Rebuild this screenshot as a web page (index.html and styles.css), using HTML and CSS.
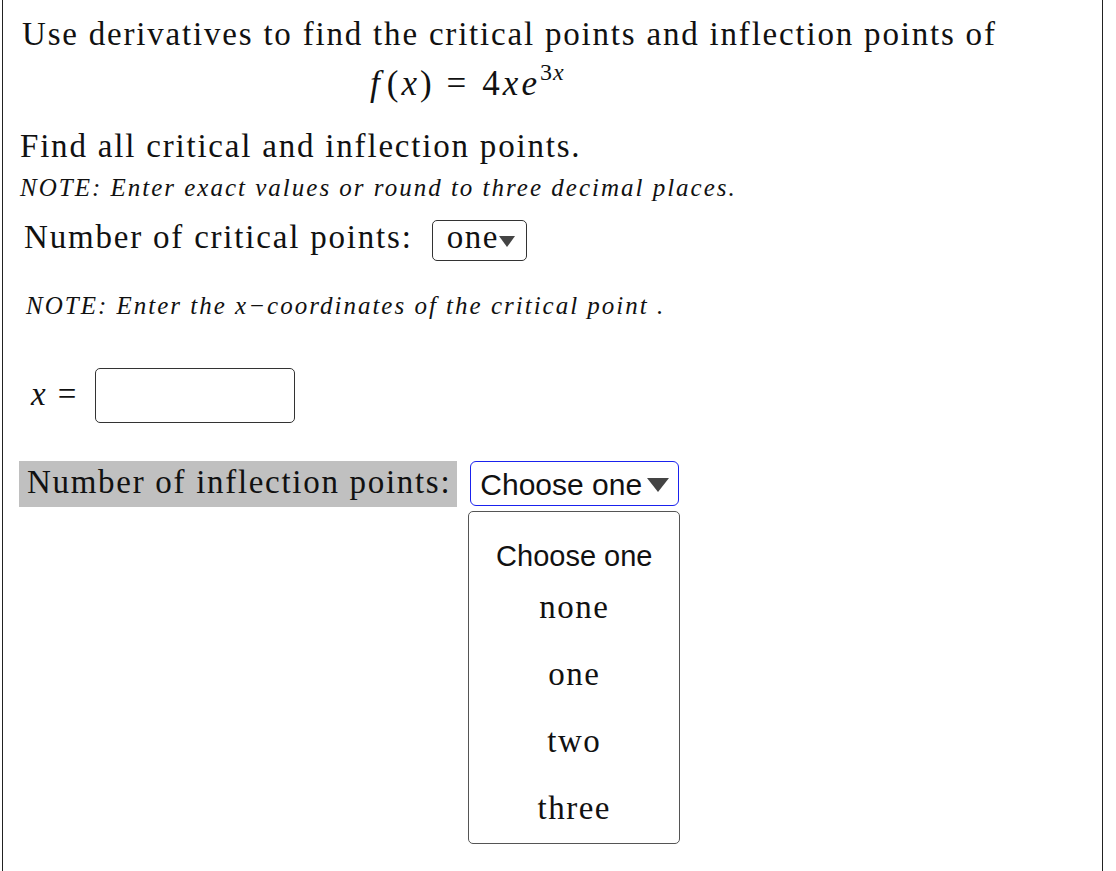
FILE: index.html
```html
<!DOCTYPE html>
<html>
<head>
<meta charset="utf-8">
<link rel="stylesheet" href="styles.css">
</head>
<body>
<div class="frame">
  <p class="intro">Use derivatives to find the critical points and inflection points of</p>
  <div class="formula"><i class="fn">f</i>(<i>x</i>)<span class="eq">=</span>4<i>xe</i><sup>3<i>x</i></sup></div>
  <p class="lead">Find all critical and inflection points.</p>
  <p class="note">NOTE: Enter exact values or round to three decimal places.</p>
  <div class="row crit">
    <span class="crit-label">Number of critical points:</span>
    <span class="sel sel-small">one<span class="tri"></span></span>
  </div>
  <p class="note note2">NOTE: Enter the <i>x</i>−coordinates of the critical point .</p>
  <div class="row xrow">
    <span class="math"><i>x</i><span class="eq2">=</span></span>
    <span class="input"></span>
  </div>
  <div class="row infl">
    <span class="hl">Number of inflection points:</span>
    <div class="selwrap">
      <span class="sel sel-blue">Choose one<span class="tri"></span></span>
      <ul class="menu">
        <li class="sans">Choose one</li>
        <li>none</li>
        <li>one</li>
        <li>two</li>
        <li>three</li>
      </ul>
    </div>
  </div>
</div>
</body>
</html>
```

FILE: styles.css
```css
html, body {
  margin: 0;
  padding: 0;
  background: #fff;
}
body {
  font-family: "Liberation Serif", "DejaVu Serif", serif;
  color: #111;
}
.frame {
  margin-left: 2px;
  width: 1101px;
  min-height: 900px;
  border-left: 1px solid #222;
  border-right: 1px solid #222;
  box-sizing: border-box;
  padding-left: 17px;
}
p { margin: 0; }
.intro {
  font-size: 33px;
  line-height: 40px;
  letter-spacing: 1.8px;
  padding-top: 14px;
  padding-left: 2px;
}
.formula {
  font-size: 35px;
  line-height: 40px;
  letter-spacing: 3px;
  margin-top: 10px;
  padding-left: 350px;
}
.formula .fn { margin-right: 4px; }
.formula .eq { margin: 0 13px 0 12px; }
.formula sup {
  font-size: 24px;
  vertical-align: 15px;
  line-height: 0;
  letter-spacing: 1px;
}
.lead {
  font-size: 33px;
  line-height: 40px;
  letter-spacing: 1.8px;
  margin-top: 22px;
}
.note {
  font-style: italic;
  font-size: 25px;
  line-height: 30px;
  letter-spacing: 2px;
  margin-top: 7px;
}
.row {
  display: flex;
  align-items: center;
}
.crit {
  font-size: 33px;
  letter-spacing: 1.8px;
  margin-top: 16px;
  padding-left: 4px;
  gap: 19px;
}
.crit-label { padding-bottom: 5px; }
.sel {
  display: inline-flex;
  align-items: center;
  border: 1px solid #333;
  border-radius: 5px;
  box-sizing: border-box;
}
.sel-small {
  width: 95px;
  height: 41px;
  padding-left: 14px;
  font-size: 33px;
  letter-spacing: 1.5px;
  padding-bottom: 6px;
}
.tri {
  width: 0;
  height: 0;
  border-left: 8px solid transparent;
  border-right: 8px solid transparent;
  border-top: 11px solid #444;
  margin-left: 0;
  margin-top: 8px;
}
.note2 {
  margin-top: 30px;
  padding-left: 6px;
}
.xrow {
  margin-top: 47px;
  padding-left: 11px;
  font-size: 33px;
  gap: 19px;
}
.math { display: flex; align-items: center; padding-bottom: 2px; }
.math .eq2 { margin-left: 12px; }
.input {
  display: block;
  width: 200px;
  height: 55px;
  border: 1px solid #333;
  border-radius: 5px;
  box-sizing: border-box;
}
.infl {
  margin-top: 38px;
  align-items: flex-start;
  gap: 13px;
}
.hl {
  background: #c0c0c0;
  font-size: 33px;
  letter-spacing: 1.7px;
  height: 46px;
  line-height: 42px;
  margin-left: -1px;
  padding: 0 6px 0 8px;
}
.selwrap {
  position: relative;
}
.sel-blue {
  width: 209px;
  height: 45px;
  border-color: #1a22ee;
  border-radius: 6px;
  font-family: "Liberation Sans", Arial, sans-serif;
  font-size: 30px;
  padding-left: 9px;
  padding-top: 3px;
}
.sel-blue .tri {
  margin-left: 5px;
  margin-top: -1px;
  border-left-width: 11px;
  border-right-width: 11px;
  border-top-width: 14px;
}
.menu {
  position: absolute;
  left: -2px;
  top: 50px;
  width: 212px;
  height: 333px;
  box-sizing: border-box;
  margin: 0;
  padding: 24px 0 0 0;
  list-style: none;
  border: 1px solid #555;
  border-radius: 5px;
  background: #fff;
  text-align: center;
  font-size: 33px;
  letter-spacing: 1.5px;
}
.menu li {
  height: 67px;
  line-height: 67px;
}
.menu li.sans {
  font-family: "Liberation Sans", Arial, sans-serif;
  font-size: 29px;
  letter-spacing: 0;
  height: 38px;
  line-height: 40px;
}
```
